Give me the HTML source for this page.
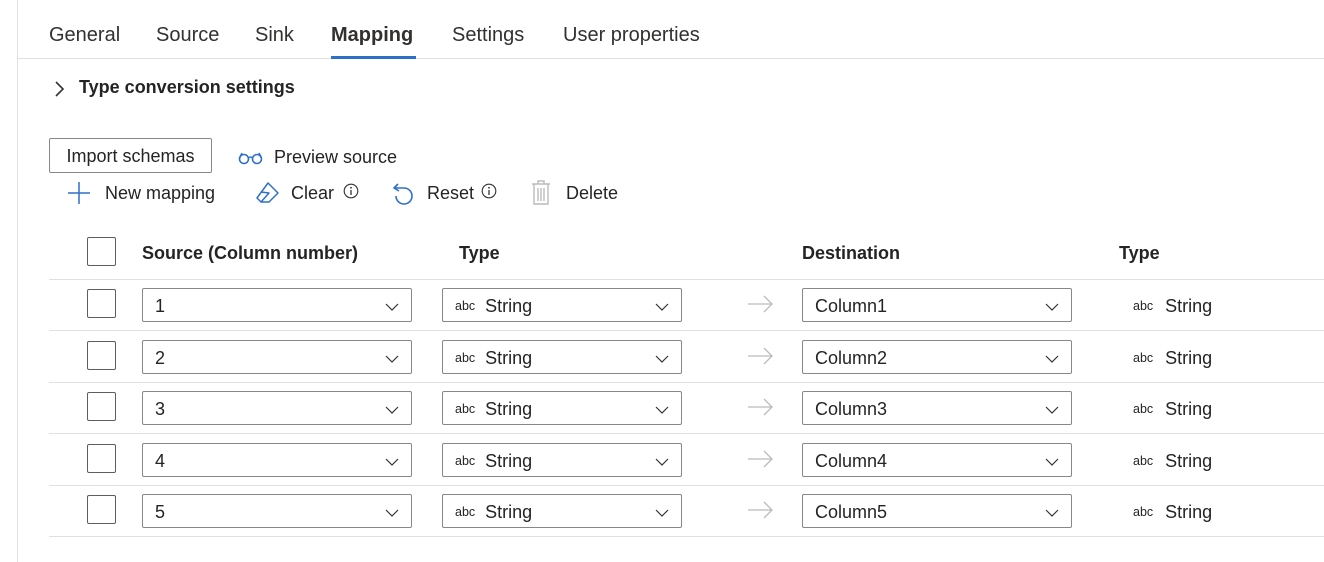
<!DOCTYPE html>
<html><head><style>
body{margin:0;width:1324px;height:562px;background:#fff;font-family:"Liberation Sans",sans-serif;color:#242424;position:relative;overflow:hidden}
.a{position:absolute;white-space:nowrap}
.vl{position:absolute;left:17px;top:0;width:1px;height:562px;background:#e1e1e1}
.hl{position:absolute;left:18px;right:0;height:1px;background:#e0e0e0}
.tab{font-size:20px;top:24px;color:#323130}
.cb{position:absolute;left:87px;width:29px;height:29px;border:1px solid #605e5c;border-radius:2px;box-sizing:border-box}
.dd{position:absolute;height:34px;border:1px solid #8a8886;border-radius:2px;box-sizing:border-box;font-size:18px;line-height:35px;padding-left:12px}
.dd svg{position:absolute;right:12px;top:13px}
.abc{font-size:12.5px;margin-right:10px;vertical-align:2px}
.hd{font-size:18px;font-weight:bold;top:243px}
.tb{font-size:18px;top:183px}
</style></head><body>
<div class="vl"></div>
<div class="a tab" style="left:49px">General</div>
<div class="a tab" style="left:156px">Source</div>
<div class="a tab" style="left:255px">Sink</div>
<div class="a tab" style="left:331px;font-weight:bold">Mapping</div>
<div class="a tab" style="left:452px">Settings</div>
<div class="a tab" style="left:563px">User properties</div>
<div class="hl" style="top:58px"></div>
<div class="a" style="left:331px;top:56px;width:85px;height:3px;background:#2f6fcc"></div>
<svg class="a" style="left:54px;top:80px" width="12" height="18"><path d="M2 2l7 7-7 7" stroke="#333" stroke-width="1.6" fill="none"/></svg>
<div class="a" style="left:79px;top:77px;font-size:18px;font-weight:bold">Type conversion settings</div>
<div class="a" style="left:49px;top:138px;width:135px;height:35px;border:1px solid #8a8886;border-radius:2px;box-sizing:border-box;font-size:18px;line-height:35px;text-align:center;width:163px">Import schemas</div>
<svg class="a" style="left:238px;top:151px" width="26" height="14"><circle cx="6" cy="8" r="4.5" stroke="#2f6fcc" stroke-width="1.6" fill="none"/><circle cx="19" cy="8" r="4.5" stroke="#2f6fcc" stroke-width="1.6" fill="none"/><path d="M10.5 7q2-2 4 0M1.5 7L4 2M23.5 7L21 2" stroke="#2f6fcc" stroke-width="1.5" fill="none"/></svg>
<div class="a" style="left:274px;top:147px;font-size:18px">Preview source</div>
<svg class="a" style="left:67px;top:181px" width="24" height="24"><path d="M12 1v22M1 12h22" stroke="#2f6fcc" stroke-width="1.5"/></svg>
<div class="a tb" style="left:105px">New mapping</div>
<svg class="a" style="left:255px;top:181px" width="26" height="24"><path d="M13 2l10 10-9 9H6l-4-4z M6 21l8-9-8-1" stroke="#2f6fcc" stroke-width="1.5" fill="none" stroke-linejoin="round"/></svg>
<div class="a tb" style="left:291px">Clear</div>
<svg class="a" style="left:343px;top:183px" width="16" height="16"><circle cx="8" cy="8" r="6.8" stroke="#333" stroke-width="1.1" fill="none"/><path d="M8 7v5" stroke="#333" stroke-width="1.3"/><circle cx="8" cy="4.8" r=".9" fill="#333"/></svg>
<svg class="a" style="left:391px;top:180px" width="24" height="26"><path d="M7 4L3 8l5 3M3 8h10a8 8 0 1 1-8 8" stroke="#2f6fcc" stroke-width="1.6" fill="none" stroke-linejoin="round"/></svg>
<div class="a tb" style="left:427px">Reset</div>
<svg class="a" style="left:481px;top:183px" width="16" height="16"><circle cx="8" cy="8" r="6.8" stroke="#333" stroke-width="1.1" fill="none"/><path d="M8 7v5" stroke="#333" stroke-width="1.3"/><circle cx="8" cy="4.8" r=".9" fill="#333"/></svg>
<svg class="a" style="left:530px;top:179px" width="22" height="27"><path d="M2 5h18M8 5V2h6v3M4 5v20h14V5M8 9v13M11 9v13M14 9v13" stroke="#bbb" stroke-width="1.4" fill="none"/></svg>
<div class="a tb" style="left:566px">Delete</div>

<div class="cb" style="top:237px"></div>
<div class="a hd" style="left:142px">Source (Column number)</div>
<div class="a hd" style="left:459px">Type</div>
<div class="a hd" style="left:802px">Destination</div>
<div class="a hd" style="left:1119px">Type</div>
<div class="hl" style="top:279px;left:49px"></div>

<div id="rows"></div>
<script>
var h='';
for(var i=0;i<5;i++){
 var t=288+i*51.6;
 var chev='<svg width="14" height="10"><path d="M1 2l6 6 6-6" stroke="#333" stroke-width="1.2" fill="none"/></svg>';
 h+='<div class="cb" style="top:'+(t+1)+'px"></div>';
 h+='<div class="dd" style="left:142px;top:'+t+'px;width:270px">'+(i+1)+chev+'</div>';
 h+='<div class="dd" style="left:442px;top:'+t+'px;width:240px"><span class="abc">abc</span>String'+chev+'</div>';
 h+='<svg class="a" style="left:747px;top:'+(t+7)+'px" width="28" height="18"><path d="M1 9h24M17 1l8 8-8 8" stroke="#bbb" stroke-width="1.3" fill="none"/></svg>';
 h+='<div class="dd" style="left:802px;top:'+t+'px;width:270px">Column'+(i+1)+chev+'</div>';
 h+='<div class="a" style="left:1133px;top:'+(t+8)+'px;font-size:18px"><span class="abc" style="margin-right:12px">abc</span>String</div>';
 h+='<div class="hl" style="left:49px;top:'+Math.round(330+i*51.6)+'px"></div>';
}
document.getElementById('rows').innerHTML=h;
</script>
</body></html>
